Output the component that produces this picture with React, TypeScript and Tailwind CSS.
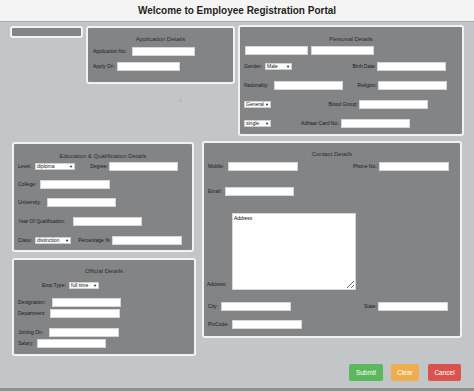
import React from 'react';

const Label: React.FC<{ w: number; right?: boolean; children: React.ReactNode }> = ({ w, right, children }) => (
  <span
    className={`shrink-0 whitespace-nowrap text-[5px] leading-[9px] text-[#1c1c1c] ${right ? 'text-right pr-[1px]' : ''}`}
    style={{ width: w }}
  >
    {children}
  </span>
);

const Box: React.FC<{ w: number }> = ({ w }) => (
  <input
    className="shrink-0 h-[9px] p-0 bg-white border border-[#d6d6d6] outline-none"
    style={{ width: w }}
  />
);

const Select: React.FC<{ w: number; value: string }> = ({ w, value }) => (
  <span
    className="shrink-0 flex items-center justify-between h-[7px] px-[1px] bg-white border border-[#cfcfcf] text-[5px] leading-[5px] text-[#111]"
    style={{ width: w }}
  >
    <span>{value}</span>
    <span className="text-[4px]">▼</span>
  </span>
);

const Panel: React.FC<{ className: string; title: string; pt: string; children?: React.ReactNode }> = ({
  className,
  title,
  pt,
  children,
}) => (
  <div className={`shrink-0 flex flex-col rounded-[3px] border-2 border-[#f2f2f2] bg-[#828486] ${pt} ${className}`}>
    <div className="text-center text-[6px] leading-[8px] text-[#2e2e2e]">{title}</div>
    {children}
  </div>
);

export default function App() {
  return (
    <div className="w-[474px] h-[391px] flex flex-col bg-[#c3c6c8] font-['Liberation_Sans',Arial,sans-serif] overflow-hidden">
      <div className="h-[22px] shrink-0 flex items-center justify-center bg-[#f4f4f4] border-b border-[#a9abad] text-[10px] font-bold text-[#1f1f1f]">
        Welcome to Employee Registration Portal
      </div>

      {/* top row */}
      <div className="flex items-start mt-[3px]">
        <div className="ml-[10px] mt-[1px] w-[73px] h-[12px] rounded-[3px] border-2 border-[#f2f2f2] bg-[#828486]" />

        <div className="ml-[3px] mt-[1px] flex flex-col">
          <Panel className="w-[149px] h-[58px]" title="Application Details" pt="pt-[7px]">
            <div className="flex items-center mt-[4px] pl-[5px]">
              <Label w={39}>Application No:</Label>
              <Box w={63} />
            </div>
            <div className="flex items-center mt-[6px] pl-[5px]">
              <Label w={24}>Apply On:</Label>
              <Box w={63} />
            </div>
          </Panel>
          <span className="ml-[93px] mt-[14px] text-[5px] leading-[5px] text-[#9c9ea0]">+</span>
        </div>

        <Panel className="ml-[3px] w-[226px] h-[111px]" title="Personal Details" pt="pt-[8px]">
          <div className="flex items-center gap-[3px] mt-[3px] pl-[5px]">
            <Box w={63} />
            <Box w={63} />
          </div>
          <div className="flex items-center mt-[7px] pl-[4px]">
            <Label w={21}>Gender:</Label>
            <Select w={27} value="Male" />
            <Label w={85} right>
              Birth Date:
            </Label>
            <Box w={69} />
          </div>
          <div className="flex items-center mt-[10px] pl-[4px]">
            <Label w={30}>Nationality:</Label>
            <Box w={69} />
            <Label w={35} right>
              Religion:
            </Label>
            <Box w={69} />
          </div>
          <div className="flex items-center mt-[10px] pl-[4px]">
            <Select w={27} value="General" />
            <Label w={88} right>
              Blood Group:
            </Label>
            <Box w={69} />
          </div>
          <div className="flex items-center mt-[10px] pl-[4px]">
            <Select w={27} value="single" />
            <Label w={70} right>
              Adhaar Card No.:
            </Label>
            <Box w={69} />
          </div>
        </Panel>
      </div>

      {/* middle row */}
      <div className="flex items-start mt-[5px]">
        <div className="ml-[12px] flex flex-col">
          <Panel className="mt-[1px] w-[182px] h-[110px]" title="Education & Qualification Details" pt="pt-[8px]">
            <div className="flex items-center mt-[2px] pl-[4px]">
              <Label w={17}>Level:</Label>
              <Select w={40} value="diploma" />
              <Label w={34} right>
                Degree:
              </Label>
              <Box w={69} />
            </div>
            <div className="flex items-center mt-[9px] pl-[4px]">
              <Label w={22}>College:</Label>
              <Box w={70} />
            </div>
            <div className="flex items-center mt-[9px] pl-[4px]">
              <Label w={29}>University:</Label>
              <Box w={69} />
            </div>
            <div className="flex items-center mt-[10px] pl-[4px]">
              <Label w={55}>Year Of Qualification:</Label>
              <Box w={69} />
            </div>
            <div className="flex items-center mt-[10px] pl-[4px]">
              <Label w={17}>Class:</Label>
              <Select w={36} value="distinction" />
              <Label w={41} right>
                Percentage %:
              </Label>
              <Box w={70} />
            </div>
          </Panel>

          <Panel className="mt-[6px] w-[184px] h-[98px]" title="Official Details" pt="pt-[7px]">
            <div className="flex items-center h-[7px] mt-[7px] pl-[28px]">
              <Label w={27}>Emp Type:</Label>
              <Select w={30} value="full time" />
            </div>
            <div className="flex items-center mt-[9px] pl-[4px]">
              <Label w={34}>Designation:</Label>
              <Box w={69} />
            </div>
            <div className="flex items-center mt-[2px] pl-[4px]">
              <Label w={32}>Department:</Label>
              <Box w={70} />
            </div>
            <div className="flex items-center mt-[10px] pl-[4px]">
              <Label w={31}>Joining On:</Label>
              <Box w={70} />
            </div>
            <div className="flex items-center mt-[2px] pl-[4px]">
              <Label w={19}>Salary:</Label>
              <Box w={69} />
            </div>
          </Panel>
        </div>

        <Panel className="ml-[6px] w-[260px] h-[197px]" title="Contact Details" pt="pt-[7px]">
          <div className="flex items-center mt-[4px] pl-[4px]">
            <Label w={20}>Mobile:</Label>
            <Box w={70} />
            <Label w={81} right>
              Phone No.:
            </Label>
            <Box w={70} />
          </div>
          <div className="flex items-center mt-[16px] pl-[4px]">
            <Label w={17}>Email:</Label>
            <Box w={69} />
          </div>
          <div className="flex items-end mt-[17px] pl-[3px]">
            <span className="shrink-0 w-[25px] mb-[1px] whitespace-nowrap text-[5px] leading-[9px] text-[#1c1c1c]">
              Address:
            </span>
            <textarea
              defaultValue="Address"
              className="shrink-0 w-[124px] h-[77px] p-[1px] bg-white border border-[#d6d6d6] outline-none text-[5px] leading-[6px] text-black"
            />
          </div>
          <div className="flex items-center mt-[12px] pl-[4px]">
            <Label w={13}>City:</Label>
            <Box w={70} />
            <Label w={87} right>
              State:
            </Label>
            <Box w={70} />
          </div>
          <div className="flex items-center mt-[9px] pl-[4px]">
            <Label w={24}>PinCode:</Label>
            <Box w={70} />
          </div>
        </Panel>
      </div>

      <div className="flex justify-end items-center gap-[8px] mt-[8px] pr-[13px]">
        <button className="w-[34px] h-[17px] rounded-[2px] bg-[#5cb85c] text-white text-[6.5px]">Submit</button>
        <button className="w-[28px] h-[17px] rounded-[2px] bg-[#f0ad4e] text-white text-[6.5px]">Clear</button>
        <button className="ml-[1px] w-[33px] h-[17px] rounded-[2px] bg-[#d9534f] text-white text-[6.5px]">Cancel</button>
      </div>

      <div className="mt-auto h-[3px] bg-[#8d8f91]" />
    </div>
  );
}
